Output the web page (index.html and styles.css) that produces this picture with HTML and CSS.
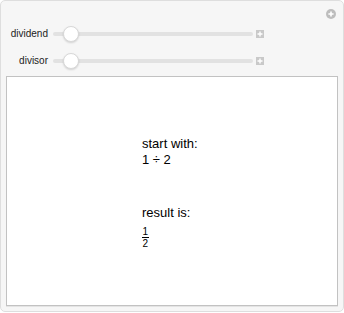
FILE: index.html
```html
<!DOCTYPE html>
<html>
<head>
<meta charset="utf-8">
<link rel="stylesheet" href="styles.css">
</head>
<body>
<div class="panel">
  <span class="corner-btn"><svg width="10" height="10" viewBox="0 0 10 10"><circle cx="5" cy="5" r="5" fill="#bdbdbd"/><path d="M5 2.4V7.6M2.4 5H7.6" stroke="#fff" stroke-width="1.6"/></svg></span>
  <div class="controls">
    <div class="row">
      <span class="label">dividend</span>
      <span class="slider"><span class="track"></span><span class="thumb"></span></span>
      <span class="plus"><svg width="8" height="8" viewBox="0 0 8 8"><rect width="8" height="8" fill="#c9c9c9"/><path d="M4 1.5V6.5M1.5 4H6.5" stroke="#fff" stroke-width="1.4"/></svg></span>
    </div>
    <div class="row">
      <span class="label">divisor</span>
      <span class="slider"><span class="track"></span><span class="thumb"></span></span>
      <span class="plus"><svg width="8" height="8" viewBox="0 0 8 8"><rect width="8" height="8" fill="#c9c9c9"/><path d="M4 1.5V6.5M1.5 4H6.5" stroke="#fff" stroke-width="1.4"/></svg></span>
    </div>
  </div>
  <div class="content">
    <div class="line">start with:</div>
    <div class="line">1 ÷ 2</div>
    <div class="line result">result is:</div>
    <div class="frac"><span class="num">1</span><span class="den">2</span></div>
  </div>
</div>
</body>
</html>
```

FILE: styles.css
```css
html, body {
  margin: 0;
  padding: 0;
  background: #ffffff;
}
.panel {
  position: relative;
  box-sizing: border-box;
  width: 344px;
  height: 312px;
  border: 1px solid #dedede;
  border-radius: 5px;
  background: #f6f6f6;
  padding: 19px 5px 5px 5px;
  font-family: "Liberation Sans", Arial, sans-serif;
}
.corner-btn {
  position: absolute;
  left: 325px;
  top: 8px;
  width: 10px;
  height: 10px;
  display: block;
}
.corner-btn svg { display: block; }
.controls {
  display: flex;
  flex-direction: column;
  margin-bottom: 2px;
}
.row {
  height: 27px;
  display: flex;
  align-items: center;
}
.label {
  width: 42px;
  text-align: right;
  font-size: 10px;
  color: #222;
  margin-right: 5px;
}
.slider {
  position: relative;
  width: 200px;
  height: 16px;
  display: flex;
  align-items: center;
}
.track {
  display: block;
  width: 100%;
  height: 4px;
  border-radius: 2px;
  background: #e2e2e2;
}
.thumb {
  position: absolute;
  left: 10px;
  top: 0;
  width: 16px;
  height: 16px;
  box-sizing: border-box;
  border-radius: 50%;
  background: #ffffff;
  border: 1px solid #d8d8d8;
  box-shadow: 0 1px 2px rgba(0,0,0,0.15);
}
.plus {
  margin-left: 3px;
  width: 8px;
  height: 8px;
  display: block;
}
.plus svg { display: block; }
.content {
  box-sizing: border-box;
  width: 332px;
  height: 230px;
  background: #ffffff;
  border: 1px solid #c2c2c2;
  box-shadow: 0 1px 0 #e4e4e4;
  padding: 59px 0 0 135px;
  color: #000;
}
.line {
  font-size: 13px;
  line-height: 16px;
}
.result {
  margin-top: 37px;
}
.frac {
  margin-top: 4px;
  display: inline-flex;
  flex-direction: column;
  align-items: center;
  font-size: 10px;
  line-height: 10px;
}
.num {
  display: block;
  padding: 0 0.5px;
  border-bottom: 1px solid #000;
  margin-bottom: 1px;
  line-height: 10px;
}
.den {
  display: block;
  line-height: 10px;
}
```
